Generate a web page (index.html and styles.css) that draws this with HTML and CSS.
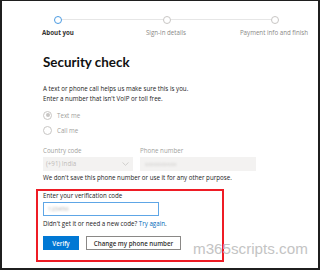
FILE: index.html
```html
<!DOCTYPE html>
<html>
<head>
<meta charset="utf-8">
<link rel="stylesheet" href="styles.css">
</head>
<body>
<div class="frame">
  <div class="stepper">
    <div class="track">
      <span class="dot active"></span><span class="line"></span><span class="dot"></span><span class="line"></span><span class="dot"></span>
    </div>
    <div class="labels">
      <span class="lbl current">About you</span>
      <span class="lbl">Sign-in details</span>
      <span class="lbl">Payment info and finish</span>
    </div>
  </div>
  <div class="content">
    <h1 class="title">Security check</h1>
    <p class="intro">A text or phone call helps us make sure this is you.<br>Enter a number that isn't VoIP or toll free.</p>
    <div class="radio first"><span class="rb checked"></span><span>Text me</span></div>
    <div class="radio"><span class="rb"></span><span>Call me</span></div>
    <div class="fields">
      <div class="field">
        <div class="flabel">Country code</div>
        <div class="select"><span>(+91) India</span>
          <svg class="chev" width="7" height="4" viewBox="0 0 7 4"><path d="M0.5 0.5 L3.5 3.3 L6.5 0.5" fill="none" stroke="#c8c6c4" stroke-width="0.8"/></svg>
        </div>
      </div>
      <div class="field">
        <div class="flabel">Phone number</div>
        <div class="pinput"><span class="blur">xxxxxxxxxx</span></div>
      </div>
    </div>
    <p class="note">We don't save this phone number or use it for any other purpose.</p>
    <div class="verify">
      <div class="vlabel">Enter your verification code</div>
      <div class="code"><span class="blur code-blur">123456</span></div>
      <p class="again">Didn't get it or need a new code? <span class="link">Try again</span>.</p>
      <div class="btns">
        <span class="btn primary">Verify</span>
        <span class="btn secondary">Change my phone number</span>
      </div>
    </div>
  </div>
  <div class="watermark">m365scripts.com</div>
</div>
</body>
</html>
```
FILE: styles.css
```css
html, body {
  margin: 0;
  padding: 0;
  background: #fff;
}
.frame {
  position: relative;
  box-sizing: border-box;
  width: 320px;
  height: 270px;
  border-style: solid;
  border-color: #1f1f1f;
  border-width: 1px 2px 2px 2px;
  font-family: "Open Sans", "Noto Sans", sans-serif;
  color: #1b1b1b;
  overflow: hidden;
}
.stepper {
  padding-top: 14px;
}
.track {
  display: flex;
  align-items: center;
  margin-left: 52px;
  width: 225px;
  height: 9px;
}
.dot {
  width: 6px;
  height: 6px;
  border-radius: 50%;
  border: 1.5px solid #c8c6c4;
  flex: none;
}
.dot.active {
  border-color: #4b9be2;
}
.line {
  flex: 1;
  height: 1.5px;
  background: #e6e6e6;
}
.labels {
  display: grid;
  grid-template-columns: 108px 108px 108px;
  margin-left: 2px;
  margin-top: 4px;
  height: 9px;
}
.lbl {
  text-align: center;
  font-size: 6.2px;
  line-height: 9px;
  color: #8a8886;
  white-space: nowrap;
}
.lbl.current {
  color: #323130;
  font-weight: 700;
}
.content {
  padding-left: 41px;
}
.title {
  margin: 16px 0 0 0;
  height: 18px;
  font-family: Lato, "Open Sans", sans-serif;
  font-size: 13.4px;
  line-height: 18px;
  font-weight: 700;
  color: #111;
}
.intro {
  margin: 13px 0 0 0;
  font-size: 6.2px;
  line-height: 10px;
}
.radio {
  display: flex;
  align-items: center;
  gap: 5px;
  font-size: 6.2px;
  color: #a19f9d;
  height: 15px;
}
.radio.first {
  margin-top: 3.5px;
}
.rb {
  box-sizing: border-box;
  width: 9px;
  height: 9px;
  border: 1px solid #c8c6c4;
  border-radius: 50%;
  display: flex;
  align-items: center;
  justify-content: center;
}
.rb.checked::after {
  content: "";
  width: 4px;
  height: 4px;
  border-radius: 50%;
  background: #c8c6c4;
}
.fields {
  display: flex;
  gap: 7px;
  margin-top: 8px;
}
.flabel {
  font-size: 6.2px;
  line-height: 9px;
  height: 9px;
  color: #a19f9d;
  margin-bottom: 2px;
}
.select {
  box-sizing: border-box;
  width: 90px;
  height: 14px;
  background: #f3f2f1;
  display: flex;
  align-items: center;
  justify-content: space-between;
  padding: 0 4px 0 3px;
  font-size: 6.2px;
  color: #bebbb8;
}
.pinput {
  box-sizing: border-box;
  width: 116px;
  height: 14px;
  background: #f3f2f1;
  display: flex;
  align-items: center;
  padding-left: 5px;
  font-size: 6px;
}
.blur {
  color: #c8c6c4;
  filter: blur(0.8px);
}
.note {
  margin: 2.5px 0 0 0;
  font-size: 6.2px;
  line-height: 10px;
}
.verify {
  margin: 6px 0 0 -7px;
  width: 188px;
  box-sizing: border-box;
  border: 2px solid #ee1c25;
  padding: 0 0 10px 5px;
}
.vlabel {
  font-size: 6.2px;
  line-height: 9px;
  height: 9px;
}
.code {
  box-sizing: border-box;
  width: 116px;
  height: 14px;
  margin-top: 2px;
  border: 1px solid #5ea6e6;
  display: flex;
  align-items: center;
  padding-left: 4px;
  font-size: 6px;
}
.code-blur {
  color: #b0aeac;
}
.again {
  margin: 3px 0 0 0;
  font-size: 6.2px;
  line-height: 10px;
}
.link {
  color: #0067b8;
}
.btns {
  display: flex;
  gap: 7px;
  margin-top: 7px;
}
.btn {
  box-sizing: border-box;
  height: 14px;
  display: flex;
  align-items: center;
  justify-content: center;
  font-size: 6.2px;
  font-weight: 600;
}
.btn.primary {
  width: 36px;
  background: #0078d4;
  color: #fff;
}
.btn.secondary {
  width: 95px;
  border: 1px solid #8a8886;
  color: #323130;
}
.watermark {
  position: absolute;
  left: 191px;
  top: 239px;
  font-family: "Liberation Sans", Arial, sans-serif;
  font-size: 15.2px;
  color: #c4c4c4;
}
```
